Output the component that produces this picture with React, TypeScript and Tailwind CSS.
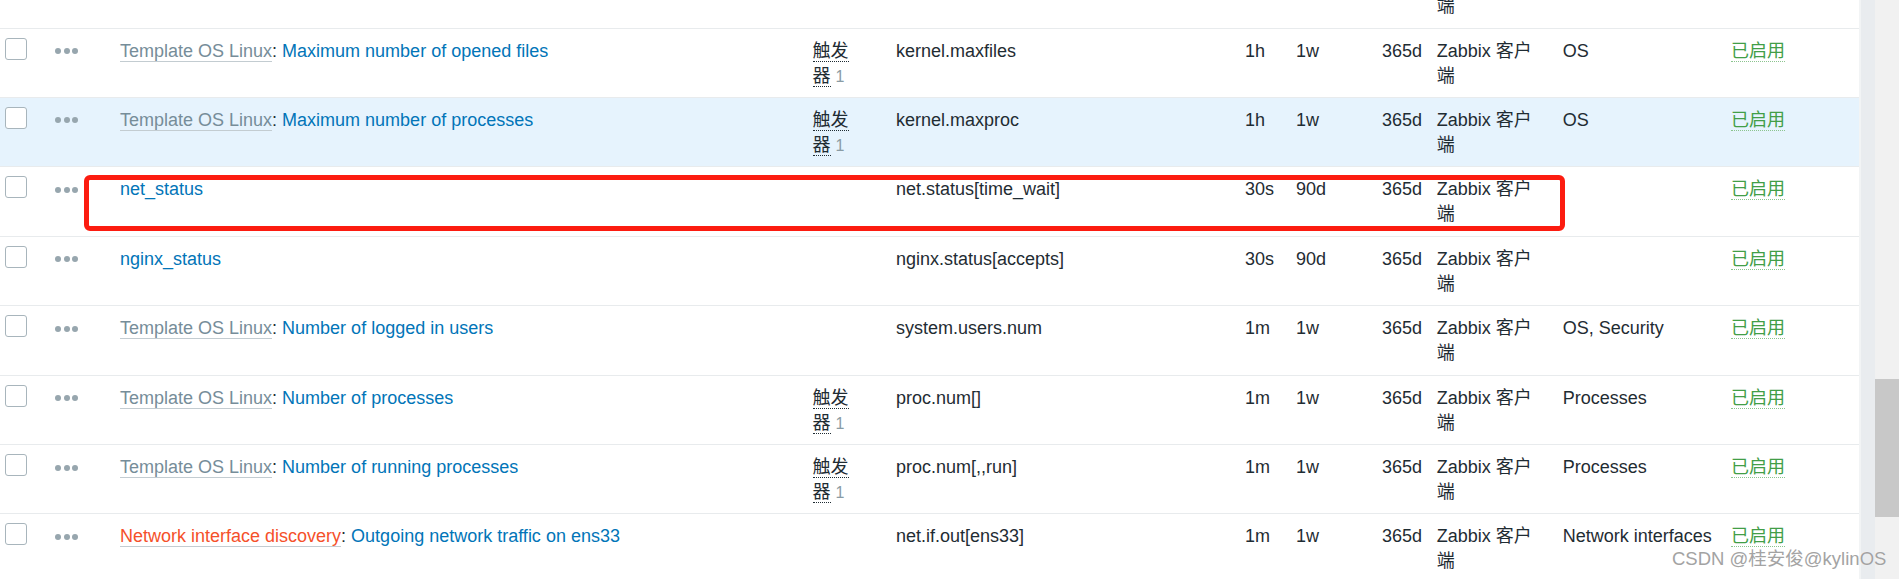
import React from "react";

type Row = {
  prefix?: string;
  prefixColor?: "gray" | "orange";
  name: string;
  trig?: boolean;
  key: string;
  interval: string;
  history: string;
  trends: string;
  apps: string;
  hl?: boolean;
};

const rows: Row[] = [
  { prefix: "Template OS Linux", prefixColor: "gray", name: "Maximum number of opened files", trig: true, key: "kernel.maxfiles", interval: "1h", history: "1w", trends: "365d", apps: "OS" },
  { prefix: "Template OS Linux", prefixColor: "gray", name: "Maximum number of processes", trig: true, key: "kernel.maxproc", interval: "1h", history: "1w", trends: "365d", apps: "OS", hl: true },
  { name: "net_status", key: "net.status[time_wait]", interval: "30s", history: "90d", trends: "365d", apps: "" },
  { name: "nginx_status", key: "nginx.status[accepts]", interval: "30s", history: "90d", trends: "365d", apps: "" },
  { prefix: "Template OS Linux", prefixColor: "gray", name: "Number of logged in users", key: "system.users.num", interval: "1m", history: "1w", trends: "365d", apps: "OS, Security" },
  { prefix: "Template OS Linux", prefixColor: "gray", name: "Number of processes", trig: true, key: "proc.num[]", interval: "1m", history: "1w", trends: "365d", apps: "Processes" },
  { prefix: "Template OS Linux", prefixColor: "gray", name: "Number of running processes", trig: true, key: "proc.num[,,run]", interval: "1m", history: "1w", trends: "365d", apps: "Processes" },
  { prefix: "Network interface discovery", prefixColor: "orange", name: "Outgoing network traffic on ens33", key: "net.if.out[ens33]", interval: "1m", history: "1w", trends: "365d", apps: "Network interfaces" },
];

function Checkbox() {
  return <div className="-mt-[1px] w-[22px] h-[22px] rounded-[3px] border-[1.5px] border-[#a8b5bc] bg-white" />;
}

function Dots() {
  return (
    <div className="flex items-center gap-[2.5px] h-[25px]">
      <span className="w-[6px] h-[6px] rounded-full bg-[#97a6ae]" />
      <span className="w-[6px] h-[6px] rounded-full bg-[#97a6ae]" />
      <span className="w-[6px] h-[6px] rounded-full bg-[#97a6ae]" />
    </div>
  );
}

function TableRow({ r }: { r: Row }) {
  return (
    <div
      className={`flex h-[69.43px] border-b border-[#e8ebed] pt-[10px] ${r.hl ? "bg-[#e6f3fd]" : "bg-white"}`}
    >
      <div className="w-[55px] shrink-0 pl-[5px]">
        <Checkbox />
      </div>
      <div className="w-[65px] shrink-0">
        <Dots />
      </div>
      <div className="w-[692.6px] shrink-0">
        {r.prefix && (
          <>
            <span
              className={`border-b-[1.5px] border-[#c3ccd1] ${r.prefixColor === "orange" ? "text-[#f5502a]" : "text-[#768d99]"}`}
            >
              {r.prefix}
            </span>
            <span className="text-[#1f2c33]">: </span>
          </>
        )}
        <span className="text-[#0275b8]">{r.name}</span>
      </div>
      <div className="w-[83.4px] shrink-0 text-[#1f2c33]">
        {r.trig && (
          <>
            <span className="border-b border-dotted border-[#1f2c33]">触发</span>
            <br />
            <span className="border-b border-dotted border-[#1f2c33]">器</span>{" "}
            <span className="text-[#8a9ba4] text-[16px]">1</span>
          </>
        )}
      </div>
      <div className="w-[349px] shrink-0 text-[#1f2c33]">{r.key}</div>
      <div className="w-[51px] shrink-0 text-[#1f2c33]">{r.interval}</div>
      <div className="w-[86px] shrink-0 text-[#1f2c33]">{r.history}</div>
      <div className="w-[54.7px] shrink-0 text-[#1f2c33]">{r.trends}</div>
      <div className="w-[126px] shrink-0 text-[#1f2c33]">
        Zabbix 客户
        <br />端
      </div>
      <div className="w-[168.3px] shrink-0 text-[#1f2c33] whitespace-nowrap">{r.apps}</div>
      <div className="flex-1">
        <span className="text-[#429e47] border-b border-dotted border-[#8cc48f]">已启用</span>
      </div>
    </div>
  );
}

export default function App() {
  return (
    <div
      className="relative w-[1899px] h-[579px] overflow-hidden flex bg-[#ebeef0] text-[18px] leading-[25px]"
      style={{ fontFamily: '"Liberation Sans", Arial, "Noto Sans CJK SC", sans-serif' }}
    >
      <div className="w-[1859px] shrink-0 bg-white overflow-hidden">
        <div className="-mt-[40.9px]">
          <div className="flex h-[69.43px] border-b border-[#e8ebed] pt-[10px] bg-white">
            <div className="w-[1436.7px] shrink-0" />
            <div className="w-[126px] shrink-0 text-[#1f2c33]">
              Zabbix 客户
              <br />端
            </div>
          </div>
          {rows.map((r, i) => (
            <TableRow key={i} r={r} />
          ))}
        </div>
      </div>
      <div className="w-[16px] shrink-0 bg-[#e9ecef] border-l-2 border-[#f2f4f5]" />
      <div className="w-[24px] shrink-0 bg-[#f1f1f1] flex flex-col">
        <div className="h-[379px]" />
        <div className="h-[138px] bg-[#c8c8c8]" />
      </div>

      <div className="absolute left-[84px] top-[175px] w-[1481px] h-[56px] border-[5px] border-[#fc1c10] rounded-[6px]" />

      <div
        className="absolute left-[1672px] top-[547px] text-[18.5px] leading-[23px] text-[#a3a3a3] whitespace-nowrap"
        style={{ textShadow: "0 0 1px #ffffff" }}
      >
        CSDN @桂安俊@kylinOS
      </div>
    </div>
  );
}
